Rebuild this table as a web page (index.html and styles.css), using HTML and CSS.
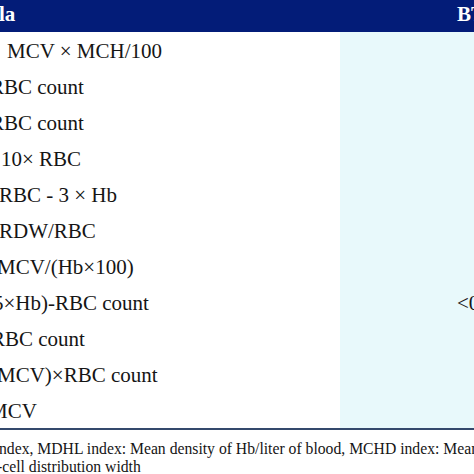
FILE: index.html
```html
<!DOCTYPE html>
<html>
<head>
<meta charset="utf-8">
<link rel="stylesheet" href="styles.css">
</head>
<body>
<div class="page">
  <div class="table">
    <div class="hcell c1"><span class="t i-1">la</span></div>
    <div class="hcell c2"><span class="t">BTI</span></div>

    <div class="cell c1"><span class="t i7">MCV × MCH/100</span></div><div class="cell c2"></div>
    <div class="cell c1"><span class="t i-10">RBC count</span></div><div class="cell c2"></div>
    <div class="cell c1"><span class="t i-10">RBC count</span></div><div class="cell c2"></div>
    <div class="cell c1"><span class="t i1">10× RBC</span></div><div class="cell c2"></div>
    <div class="cell c1"><span class="t i-1">RBC - 3 × Hb</span></div><div class="cell c2"></div>
    <div class="cell c1"><span class="t i-1">RDW/RBC</span></div><div class="cell c2"></div>
    <div class="cell c1"><span class="t i-3">MCV/(Hb×100)</span></div><div class="cell c2"></div>
    <div class="cell c1"><span class="t i-7">5×Hb)-RBC count</span></div><div class="cell c2"><span class="t">&lt;0.9</span></div>
    <div class="cell c1"><span class="t i-9">RBC count</span></div><div class="cell c2"></div>
    <div class="cell c1"><span class="t i-3">MCV)×RBC count</span></div><div class="cell c2"></div>
    <div class="cell c1"><span class="t i-11">MCV</span></div><div class="cell c2"></div>
  </div>
  <div class="notes">
    <p class="note i-1">ndex, MDHL index: Mean density of Hb/liter of blood, MCHD index: Mean</p>
    <p class="note i-3">-cell distribution width</p>
  </div>
</div>
</body>
</html>
```

FILE: styles.css
```css
html, body {
  margin: 0;
  padding: 0;
  background: #ffffff;
}
.page {
  width: 474px;
  height: 474px;
  overflow: hidden;
  font-family: "Liberation Serif", "Times New Roman", serif;
  color: #151515;
}
.table {
  display: grid;
  grid-template-columns: 340px 134px;
  grid-auto-rows: 36px;
  grid-template-rows: 32px;
  border-bottom: 2px solid #34496c;
}
.hcell {
  background: #031c78;
  color: #ffffff;
  font-weight: bold;
  font-size: 21px;
  line-height: 29px;
  white-space: nowrap;
  overflow: hidden;
}
.cell {
  font-size: 21px;
  line-height: 38px;
  white-space: nowrap;
  overflow: hidden;
}
.cell.c2 {
  background: #e8f9fb;
}
.c2 .t {
  display: block;
  padding-left: 117px;
}
.t {
  display: block;
}
.i7 { margin-left: 7px; }
.i1 { margin-left: 1px; }
.i-1 { margin-left: -1px; }
.i-2 { margin-left: -2px; }
.i-3 { margin-left: -3px; }
.i-7 { margin-left: -7px; }
.i-9 { margin-left: -9px; }
.i-10 { margin-left: -10px; }
.i-11 { margin-left: -11px; }
.notes {
  padding-top: 10px;
  font-size: 15.7px;
  line-height: 18px;
  white-space: nowrap;
  overflow: hidden;
}
.note {
  margin-top: 0;
  margin-bottom: 0;
}
```
